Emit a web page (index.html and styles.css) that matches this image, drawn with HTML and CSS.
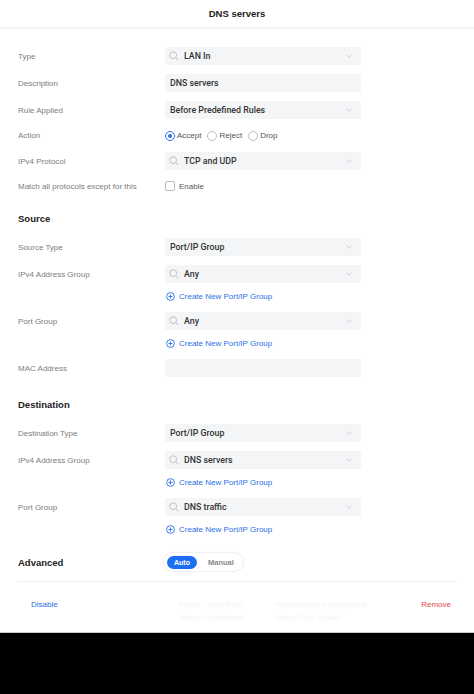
FILE: index.html
```html
<!DOCTYPE html>
<html>
<head>
<meta charset="utf-8">
<link rel="stylesheet" href="styles.css">
</head>
<body>
<div class="page">
  <div class="header">DNS servers</div>
  <div class="form">
    <div class="row">
      <div class="label">Type</div>
      <div class="field select">
        <svg class="search" width="10" height="10" viewBox="0 0 10 10"><circle cx="4.2" cy="4.2" r="3.4" fill="none" stroke="#b8bcc2" stroke-width="0.9"/><path d="M6.7 6.7 L9.3 9.3" stroke="#b8bcc2" stroke-width="0.9"/></svg>
        <span class="value">LAN In</span>
        <svg class="chev" width="6" height="4" viewBox="0 0 6 4"><path d="M0.5 0.8 L3 3.2 L5.5 0.8" fill="none" stroke="#c4c7cc" stroke-width="0.8"/></svg>
      </div>
    </div>
    <div class="row">
      <div class="label">Description</div>
      <div class="field"><span class="value">DNS servers</span></div>
    </div>
    <div class="row">
      <div class="label">Rule Applied</div>
      <div class="field select">
        <span class="value">Before Predefined Rules</span>
        <svg class="chev" width="6" height="4" viewBox="0 0 6 4"><path d="M0.5 0.8 L3 3.2 L5.5 0.8" fill="none" stroke="#c4c7cc" stroke-width="0.8"/></svg>
      </div>
    </div>
    <div class="row row-action">
      <div class="label">Action</div>
      <div class="radios">
        <span class="radio checked"></span><span class="opt">Accept</span>
        <span class="radio"></span><span class="opt">Reject</span>
        <span class="radio"></span><span class="opt">Drop</span>
      </div>
    </div>
    <div class="row">
      <div class="label">IPv4 Protocol</div>
      <div class="field select">
        <svg class="search" width="10" height="10" viewBox="0 0 10 10"><circle cx="4.2" cy="4.2" r="3.4" fill="none" stroke="#b8bcc2" stroke-width="0.9"/><path d="M6.7 6.7 L9.3 9.3" stroke="#b8bcc2" stroke-width="0.9"/></svg>
        <span class="value">TCP and UDP</span>
        <svg class="chev" width="6" height="4" viewBox="0 0 6 4"><path d="M0.5 0.8 L3 3.2 L5.5 0.8" fill="none" stroke="#c4c7cc" stroke-width="0.8"/></svg>
      </div>
    </div>
    <div class="row row-check">
      <div class="label">Match all protocols except for this</div>
      <div class="check-wrap"><span class="checkbox"></span><span class="opt">Enable</span></div>
    </div>

    <div class="section-title">Source</div>
    <div class="row">
      <div class="label">Source Type</div>
      <div class="field select">
        <span class="value">Port/IP Group</span>
        <svg class="chev" width="6" height="4" viewBox="0 0 6 4"><path d="M0.5 0.8 L3 3.2 L5.5 0.8" fill="none" stroke="#c4c7cc" stroke-width="0.8"/></svg>
      </div>
    </div>
    <div class="row">
      <div class="label">IPv4 Address Group</div>
      <div class="field select">
        <svg class="search" width="10" height="10" viewBox="0 0 10 10"><circle cx="4.2" cy="4.2" r="3.4" fill="none" stroke="#b8bcc2" stroke-width="0.9"/><path d="M6.7 6.7 L9.3 9.3" stroke="#b8bcc2" stroke-width="0.9"/></svg>
        <span class="value">Any</span>
        <svg class="chev" width="6" height="4" viewBox="0 0 6 4"><path d="M0.5 0.8 L3 3.2 L5.5 0.8" fill="none" stroke="#c4c7cc" stroke-width="0.8"/></svg>
      </div>
    </div>
    <div class="link-row">
      <svg class="plus" width="9" height="9" viewBox="0 0 9 9"><circle cx="4.5" cy="4.5" r="3.9" fill="none" stroke="#2b6fe6" stroke-width="0.9"/><path d="M4.5 2.5 V6.5 M2.5 4.5 H6.5" stroke="#2b6fe6" stroke-width="0.9"/></svg>
      <span>Create New Port/IP Group</span>
    </div>
    <div class="row">
      <div class="label">Port Group</div>
      <div class="field select">
        <svg class="search" width="10" height="10" viewBox="0 0 10 10"><circle cx="4.2" cy="4.2" r="3.4" fill="none" stroke="#b8bcc2" stroke-width="0.9"/><path d="M6.7 6.7 L9.3 9.3" stroke="#b8bcc2" stroke-width="0.9"/></svg>
        <span class="value">Any</span>
        <svg class="chev" width="6" height="4" viewBox="0 0 6 4"><path d="M0.5 0.8 L3 3.2 L5.5 0.8" fill="none" stroke="#c4c7cc" stroke-width="0.8"/></svg>
      </div>
    </div>
    <div class="link-row">
      <svg class="plus" width="9" height="9" viewBox="0 0 9 9"><circle cx="4.5" cy="4.5" r="3.9" fill="none" stroke="#2b6fe6" stroke-width="0.9"/><path d="M4.5 2.5 V6.5 M2.5 4.5 H6.5" stroke="#2b6fe6" stroke-width="0.9"/></svg>
      <span>Create New Port/IP Group</span>
    </div>
    <div class="row">
      <div class="label">MAC Address</div>
      <div class="field"></div>
    </div>

    <div class="section-title dest">Destination</div>
    <div class="row">
      <div class="label">Destination Type</div>
      <div class="field select">
        <span class="value">Port/IP Group</span>
        <svg class="chev" width="6" height="4" viewBox="0 0 6 4"><path d="M0.5 0.8 L3 3.2 L5.5 0.8" fill="none" stroke="#c4c7cc" stroke-width="0.8"/></svg>
      </div>
    </div>
    <div class="row">
      <div class="label">IPv4 Address Group</div>
      <div class="field select">
        <svg class="search" width="10" height="10" viewBox="0 0 10 10"><circle cx="4.2" cy="4.2" r="3.4" fill="none" stroke="#b8bcc2" stroke-width="0.9"/><path d="M6.7 6.7 L9.3 9.3" stroke="#b8bcc2" stroke-width="0.9"/></svg>
        <span class="value">DNS servers</span>
        <svg class="chev" width="6" height="4" viewBox="0 0 6 4"><path d="M0.5 0.8 L3 3.2 L5.5 0.8" fill="none" stroke="#c4c7cc" stroke-width="0.8"/></svg>
      </div>
    </div>
    <div class="link-row">
      <svg class="plus" width="9" height="9" viewBox="0 0 9 9"><circle cx="4.5" cy="4.5" r="3.9" fill="none" stroke="#2b6fe6" stroke-width="0.9"/><path d="M4.5 2.5 V6.5 M2.5 4.5 H6.5" stroke="#2b6fe6" stroke-width="0.9"/></svg>
      <span>Create New Port/IP Group</span>
    </div>
    <div class="row">
      <div class="label">Port Group</div>
      <div class="field select">
        <svg class="search" width="10" height="10" viewBox="0 0 10 10"><circle cx="4.2" cy="4.2" r="3.4" fill="none" stroke="#b8bcc2" stroke-width="0.9"/><path d="M6.7 6.7 L9.3 9.3" stroke="#b8bcc2" stroke-width="0.9"/></svg>
        <span class="value">DNS traffic</span>
        <svg class="chev" width="6" height="4" viewBox="0 0 6 4"><path d="M0.5 0.8 L3 3.2 L5.5 0.8" fill="none" stroke="#c4c7cc" stroke-width="0.8"/></svg>
      </div>
    </div>
    <div class="link-row">
      <svg class="plus" width="9" height="9" viewBox="0 0 9 9"><circle cx="4.5" cy="4.5" r="3.9" fill="none" stroke="#2b6fe6" stroke-width="0.9"/><path d="M4.5 2.5 V6.5 M2.5 4.5 H6.5" stroke="#2b6fe6" stroke-width="0.9"/></svg>
      <span>Create New Port/IP Group</span>
    </div>

    <div class="adv-row">
      <div class="adv-label">Advanced</div>
      <div class="toggle">
        <span class="tog-on">Auto</span>
        <span class="tog-off">Manual</span>
      </div>
    </div>
    <div class="divider"></div>
  </div>
  <div class="footer">
    <span class="btn-disable">Disable</span>
    <div class="ghost">
      <div class="ghost-col"><span>Match Client Rule</span><span>Before Predefined</span></div>
      <div class="ghost-col"><span>Match Applied Equipment</span><span>(After Rule Whole)</span></div>
    </div>
    <span class="btn-remove">Remove</span>
  </div>
</div>
</body>
</html>
```
FILE: styles.css
```css
* { box-sizing: border-box; }
html, body { margin: 0; padding: 0; }
body {
  background: #000;
  font-family: "Liberation Sans", Arial, sans-serif;
  width: 474px;
  height: 694px;
  overflow: hidden;
}
.page {
  background: #fff;
  height: 633px;
  border-bottom: 1px solid #c9c9c9;
  display: flex;
  flex-direction: column;
}
.header {
  height: 29px;
  flex: none;
  border-bottom: 2px solid #f4f4f6;
  text-align: center;
  font-size: 9.5px;
  font-weight: bold;
  color: #222;
  line-height: 27px;
}
.form {
  display: flex;
  flex-direction: column;
  padding: 18px 18px 0 18px;
}
.row {
  display: flex;
  align-items: center;
  height: 18px;
  margin-bottom: 9px;
  flex: none;
}
.row-action { height: 15px; }
.row-check { height: 14px; }
.label {
  width: 147px;
  flex: none;
  font-size: 8px;
  color: #7d7d7d;
}
.field {
  width: 196px;
  height: 18px;
  background: #f4f5f7;
  border-radius: 2px;
  display: flex;
  align-items: center;
  padding: 0 9px 0 5px;
}
.value {
  font-family: Roboto, "Liberation Sans", sans-serif;
  font-size: 8.8px;
  font-weight: 500;
  color: #333;
  flex: 1;
}
.search { flex: none; margin-left: -1px; margin-right: 5px; }
.chev { flex: none; }
.radios {
  display: flex;
  align-items: center;
}
.radio {
  width: 10px;
  height: 10px;
  border: 1px solid #b8bcc2;
  border-radius: 50%;
  margin-right: 2px;
  display: inline-flex;
  align-items: center;
  justify-content: center;
}
.radio.checked { border-color: #2b6fe6; }
.radio.checked::after {
  content: "";
  width: 4px;
  height: 4px;
  border-radius: 50%;
  background: #2b6fe6;
}
.opt {
  font-size: 8px;
  color: #555;
  margin-right: 6px;
}
.check-wrap { display: flex; align-items: center; }
.checkbox {
  width: 10px;
  height: 10px;
  border: 1px solid #b8bcc2;
  border-radius: 2px;
  margin-right: 4px;
}
.section-title {
  font-size: 9.5px;
  font-weight: bold;
  color: #222;
  height: 12px;
  line-height: 12px;
  margin: 11px 0 13px;
  flex: none;
}
.section-title.dest { margin-top: 13px; }
.link-row {
  margin: -2px 0 10px 147px;
  height: 12px;
  display: flex;
  align-items: center;
  color: #2b6fe6;
  font-size: 8px;
  flex: none;
}
.plus { margin: 0 4px 0 1px; flex: none; }
.adv-row {
  display: flex;
  align-items: center;
  height: 20px;
  margin-top: 7px;
  flex: none;
}
.adv-label {
  width: 145px;
  font-size: 9.5px;
  font-weight: bold;
  color: #222;
}
.toggle {
  width: 81px;
  height: 20px;
  border-radius: 10px;
  background: #fff;
  border: 1px solid #f0f1f3;
  box-shadow: 0 0 2px rgba(0,0,0,0.04);
  display: flex;
  align-items: center;
  padding-left: 3px;
}
.tog-on {
  background: #1d6ff2;
  color: #fff;
  font-size: 7px;
  font-weight: bold;
  width: 30px;
  height: 13px;
  border-radius: 7px;
  display: flex;
  align-items: center;
  justify-content: center;
}
.tog-off {
  margin-left: 11px;
  font-size: 7.5px;
  font-weight: bold;
  color: #8a8a8a;
}
.divider {
  height: 1px;
  background: #eeeff1;
  margin: 9px -1px 0 -1px;
  flex: none;
}
.footer {
  flex: 1;
  display: flex;
  align-items: flex-start;
  padding: 18px 23px 0 31px;
  font-size: 8px;
}
.btn-disable { color: #2b6fe6; }
.btn-remove { color: #e5484d; margin-left: auto; }
.ghost {
  display: flex;
  margin-left: 121px;
  color: #f5f5f6;
  font-size: 8px;
  white-space: nowrap;
}
.ghost-col {
  display: flex;
  flex-direction: column;
  gap: 4px;
  width: 97px;
}
```
